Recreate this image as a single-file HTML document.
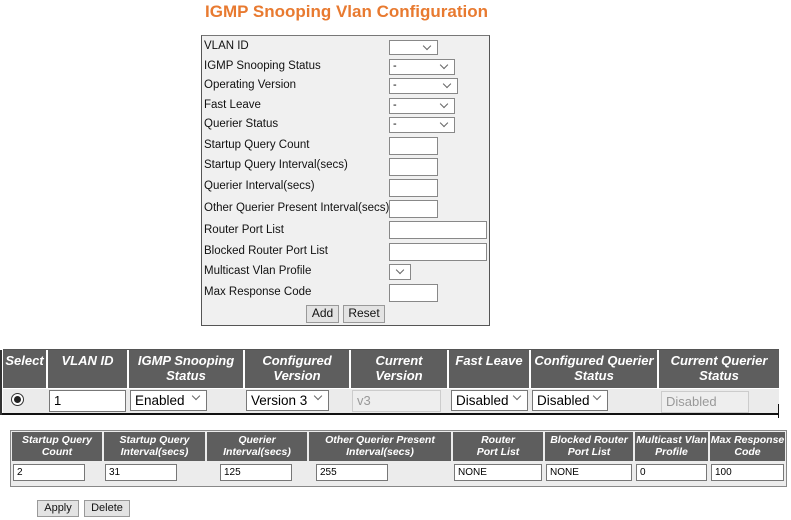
<!DOCTYPE html>
<html><head><meta charset="utf-8"><style>
*{margin:0;padding:0;box-sizing:border-box}
body{width:791px;height:520px;background:#fff;font-family:"Liberation Sans",Arial,sans-serif;position:relative;overflow:hidden}
.a{position:absolute}
.t{color:#e87a30;font-weight:bold;font-size:17px;left:205px;top:2px;white-space:nowrap}
.box{left:201px;top:35px;width:289px;height:291px;background:#f0f0f0;border:1px solid #555;border-top-color:#777}
.l{font-size:11.5px;color:#111;left:204px;white-space:nowrap}
.in{background:#fff;border:1px solid #888}
.sel{background:#fff;border:1px solid #888;font-size:11px;padding-left:3px;line-height:13px}
.sel:after{content:"";position:absolute;right:7px;top:2px;width:5px;height:5px;border-right:1px solid #666;border-bottom:1px solid #666;transform:rotate(45deg)}
.btn{background:#e3e3e3;border:1px solid #999;font-size:12px;text-align:center;line-height:15px;color:#111}
.h{background:#5e5e5e;color:#fff;font-style:italic;font-weight:bold;text-align:center;font-size:13px;line-height:15px;padding-top:3px}
.h2{font-size:10.5px;line-height:12px;padding-top:2px}
.d{background:#ebebeb}
.bi{background:#fff;border:1px solid #777;font-size:13px;padding-left:4px;line-height:20px}
.sm{font-size:10px;line-height:15px;padding-left:3px}
</style></head><body>
<div class="a t">IGMP Snooping Vlan Configuration</div>
<div class="a box"></div>
<div class="a l" style="top:40px">VLAN ID</div>
<div class="a l" style="top:60px">IGMP Snooping Status</div>
<div class="a l" style="top:79px">Operating Version</div>
<div class="a l" style="top:99px">Fast Leave</div>
<div class="a l" style="top:118px">Querier Status</div>
<div class="a l" style="top:139px">Startup Query Count</div>
<div class="a l" style="top:159px">Startup Query Interval(secs)</div>
<div class="a l" style="top:180px">Querier Interval(secs)</div>
<div class="a l" style="top:202px">Other Querier Present Interval(secs)</div>
<div class="a l" style="top:224px">Router Port List</div>
<div class="a l" style="top:245px">Blocked Router Port List</div>
<div class="a l" style="top:265px">Multicast Vlan Profile</div>
<div class="a l" style="top:286px">Max Response Code</div>
<div class="a sel" style="left:389px;top:40px;width:49px;height:15px"></div>
<div class="a sel" style="left:389px;top:59px;width:66px;height:16px">-</div>
<div class="a sel" style="left:389px;top:78px;width:69px;height:16px">-</div>
<div class="a sel" style="left:389px;top:98px;width:66px;height:16px">-</div>
<div class="a sel" style="left:389px;top:117px;width:66px;height:16px">-</div>
<div class="a in" style="left:389px;top:137px;width:49px;height:18px"></div>
<div class="a in" style="left:389px;top:158px;width:49px;height:18px"></div>
<div class="a in" style="left:389px;top:179px;width:49px;height:18px"></div>
<div class="a in" style="left:389px;top:200px;width:49px;height:18px"></div>
<div class="a in" style="left:389px;top:221px;width:98px;height:18px"></div>
<div class="a in" style="left:389px;top:243px;width:98px;height:18px"></div>
<div class="a sel" style="left:389px;top:264px;width:22px;height:16px"></div>
<div class="a in" style="left:389px;top:284px;width:49px;height:18px"></div>
<div class="a btn" style="left:306px;top:305px;width:33px;height:18px">Add</div>
<div class="a btn" style="left:343px;top:305px;width:42px;height:18px">Reset</div>

<div class="a" style="left:3px;top:349px;width:776px;height:1px;background:#555"></div>
<div class="a h" style="left:3px;top:350px;width:43px;height:38px">Select</div>
<div class="a h" style="left:48px;top:350px;width:79px;height:38px">VLAN ID</div>
<div class="a h" style="left:129px;top:350px;width:114px;height:38px">IGMP Snooping<br>Status</div>
<div class="a h" style="left:245px;top:350px;width:104px;height:38px">Configured<br>Version</div>
<div class="a h" style="left:351px;top:350px;width:96px;height:38px">Current<br>Version</div>
<div class="a h" style="left:449px;top:350px;width:80px;height:38px">Fast Leave</div>
<div class="a h" style="left:531px;top:350px;width:126px;height:38px">Configured Querier<br>Status</div>
<div class="a h" style="left:659px;top:350px;width:120px;height:38px">Current Querier<br>Status</div>
<div class="a d" style="left:3px;top:389px;width:776px;height:25px"></div>
<div class="a" style="left:0px;top:413px;width:779px;height:2px;background:#111"></div>
<div class="a" style="left:778px;top:404px;width:1px;height:14px;background:#111"></div>
<div class="a" style="left:0px;top:350px;width:2px;height:65px;background:#333"></div>
<div class="a" style="left:11px;top:393px;width:13px;height:13px;border-radius:50%;border:1px solid #333;background:#fff"></div>
<div class="a" style="left:14px;top:396px;width:7px;height:7px;border-radius:50%;background:#222"></div>
<div class="a bi" style="left:49px;top:390px;width:77px;height:22px">1</div>
<div class="a bi sel" style="left:130px;top:390px;width:77px;height:21px;font-size:13.5px;line-height:19px">Enabled</div>
<div class="a bi sel" style="left:246px;top:390px;width:83px;height:21px;font-size:13.5px;line-height:19px">Version 3</div>
<div class="a bi" style="left:352px;top:390px;width:89px;height:22px;background:#eee;color:#999;border-color:#ccc">v3</div>
<div class="a bi sel" style="left:451px;top:390px;width:77px;height:21px;font-size:13.5px;line-height:19px">Disabled</div>
<div class="a bi sel" style="left:532px;top:390px;width:76px;height:21px;font-size:13.5px;line-height:19px">Disabled</div>
<div class="a bi" style="left:661px;top:391px;width:88px;height:22px;background:#eee;color:#999;border-color:#ccc">Disabled</div>

<div class="a" style="left:10px;top:430px;width:777px;height:57px;background:#ececec;border:1px solid #888"></div>
<div class="a h h2" style="left:12px;top:432px;width:90px;height:29px">Startup Query<br>Count</div>
<div class="a h h2" style="left:104px;top:432px;width:101px;height:29px">Startup Query<br>Interval(secs)</div>
<div class="a h h2" style="left:207px;top:432px;width:100px;height:29px">Querier<br>Interval(secs)</div>
<div class="a h h2" style="left:309px;top:432px;width:142px;height:29px">Other Querier Present<br>Interval(secs)</div>
<div class="a h h2" style="left:453px;top:432px;width:90px;height:29px">Router<br>Port List</div>
<div class="a h h2" style="left:545px;top:432px;width:88px;height:29px">Blocked Router<br>Port List</div>
<div class="a h h2" style="left:635px;top:432px;width:73px;height:29px">Multicast Vlan<br>Profile</div>
<div class="a h h2" style="left:710px;top:432px;width:75px;height:29px">Max Response<br>Code</div>
<div class="a bi sm" style="left:13px;top:464px;width:72px;height:17px">2</div>
<div class="a bi sm" style="left:105px;top:464px;width:72px;height:17px">31</div>
<div class="a bi sm" style="left:220px;top:464px;width:72px;height:17px">125</div>
<div class="a bi sm" style="left:316px;top:464px;width:72px;height:17px">255</div>
<div class="a bi sm" style="left:454px;top:464px;width:88px;height:17px">NONE</div>
<div class="a bi sm" style="left:546px;top:464px;width:86px;height:17px">NONE</div>
<div class="a bi sm" style="left:636px;top:464px;width:71px;height:17px">0</div>
<div class="a bi sm" style="left:711px;top:464px;width:73px;height:17px">100</div>

<div class="a btn" style="left:37px;top:500px;width:42px;height:17px;font-size:11px">Apply</div>
<div class="a btn" style="left:84px;top:500px;width:46px;height:17px;font-size:11px">Delete</div>
</body></html>
